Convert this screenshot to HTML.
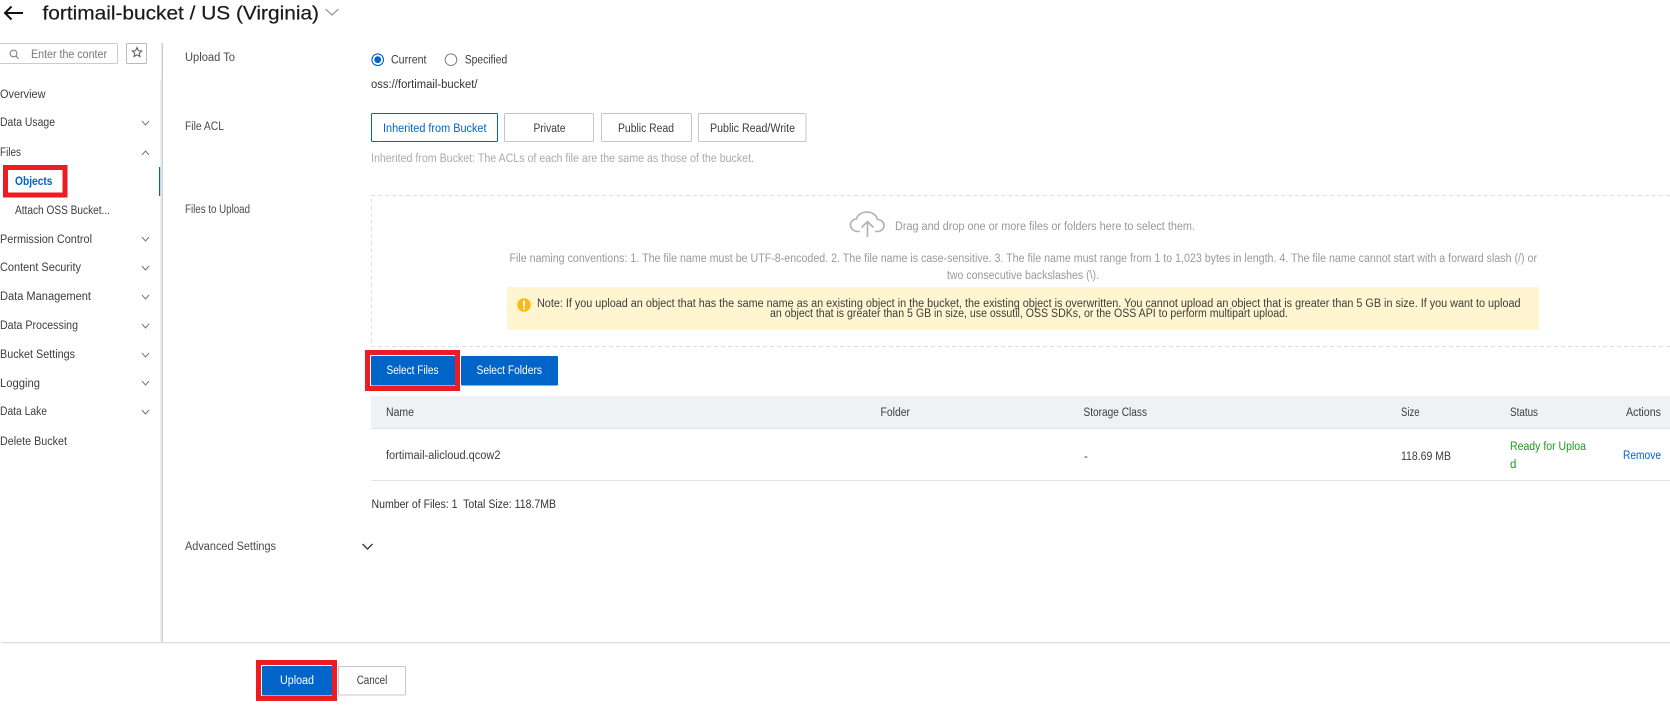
<!DOCTYPE html>
<html lang="en">
<head>
<meta charset="utf-8">
<title>Upload</title>
<style>
html,body{margin:0;padding:0;background:#fff;width:1670px;height:716px;overflow:hidden}
svg{display:block}
text{font-family:"Liberation Sans",Arial,sans-serif;font-size:11.5px;fill:#444;white-space:pre}
.m{fill:#3d3d3d}
.l{fill:#4a4a4a}
.g{fill:#999}
.h{fill:#aaa}
.w{fill:#fff}
.chev{fill:none;stroke:#777;stroke-width:1}
</style>
</head>
<body>
<svg width="1670" height="716" viewBox="0 0 1670 716" xmlns="http://www.w3.org/2000/svg">
<rect width="1670" height="716" fill="#fff"/>

<!-- header -->
<path d="M23 13H5M11.5 6.5L5 13L11.5 19.5" fill="none" stroke="#111" stroke-width="2"/>
<text x="42.5" y="19.5" textLength="276.5" lengthAdjust="spacingAndGlyphs" style="font-size:19px;fill:#1a1a1a;stroke:#1a1a1a;stroke-width:.2">fortimail-bucket / US (Virginia)</text>
<path d="M325.5 9L332 15L338.5 9" fill="none" stroke="#999" stroke-width="1.2"/>

<!-- search -->
<rect x="-2" y="43.5" width="119.5" height="20" rx="1" fill="#fff" stroke="#ccc"/>
<circle cx="13.5" cy="53.5" r="3.4" fill="none" stroke="#777"/>
<path d="M16 56L18.5 58.5" stroke="#777" stroke-width="1"/>
<text x="31" y="58" textLength="76" lengthAdjust="spacingAndGlyphs" style="fill:#777">Enter the conter</text>
<rect x="126.5" y="43.5" width="20" height="20" rx="1" fill="#fff" stroke="#bbb"/>
<path d="M137 47.5L138.4 50.7L141.8 51L139.2 53.2L140 56.6L137 54.8L134 56.6L134.8 53.2L132.2 51L135.6 50.7Z" fill="none" stroke="#555" stroke-width="1"/>

<!-- dividers -->
<rect x="160" y="79" width="1" height="563" fill="#f0f0f0"/>
<rect x="161.5" y="43" width="1.5" height="599" fill="#cfcfcf"/>
<rect x="159" y="167" width="1.2" height="29" fill="#0064c8"/>
<rect x="1" y="642" width="1669" height="1.2" fill="#dcdcdc"/>

<!-- sidebar -->
<text class="m" x="0" y="98" textLength="45.5" lengthAdjust="spacingAndGlyphs">Overview</text>
<text class="m" x="0" y="126" textLength="55" lengthAdjust="spacingAndGlyphs">Data Usage</text>
<text class="m" x="0" y="156" textLength="21" lengthAdjust="spacingAndGlyphs">Files</text>
<text x="15" y="185" textLength="37.5" lengthAdjust="spacingAndGlyphs" style="fill:#0064c8;font-weight:bold">Objects</text>
<text class="m" x="15" y="214" textLength="95" lengthAdjust="spacingAndGlyphs">Attach OSS Bucket...</text>
<text class="m" x="0" y="243" textLength="92" lengthAdjust="spacingAndGlyphs">Permission Control</text>
<text class="m" x="0" y="271" textLength="81" lengthAdjust="spacingAndGlyphs">Content Security</text>
<text class="m" x="0" y="300" textLength="91" lengthAdjust="spacingAndGlyphs">Data Management</text>
<text class="m" x="0" y="329" textLength="78" lengthAdjust="spacingAndGlyphs">Data Processing</text>
<text class="m" x="0" y="358" textLength="75" lengthAdjust="spacingAndGlyphs">Bucket Settings</text>
<text class="m" x="0" y="387" textLength="40" lengthAdjust="spacingAndGlyphs">Logging</text>
<text class="m" x="0" y="415" textLength="47" lengthAdjust="spacingAndGlyphs">Data Lake</text>
<text class="m" x="0" y="445" textLength="67" lengthAdjust="spacingAndGlyphs">Delete Bucket</text>

<path class="chev" d="M142 121L145.5 125L149 121"/>
<path class="chev" d="M142 155L145.5 151L149 155"/>
<path class="chev" d="M142 237L145.5 241L149 237"/>
<path class="chev" d="M142 266L145.5 270L149 266"/>
<path class="chev" d="M142 295L145.5 299L149 295"/>
<path class="chev" d="M142 324L145.5 328L149 324"/>
<path class="chev" d="M142 353L145.5 357L149 353"/>
<path class="chev" d="M142 381L145.5 385L149 381"/>
<path class="chev" d="M142 410L145.5 414L149 410"/>

<rect x="5.5" y="167.5" width="59.5" height="27.5" fill="none" stroke="#ed1c24" stroke-width="5"/>

<!-- labels -->
<text class="l" x="185" y="61" textLength="50" lengthAdjust="spacingAndGlyphs">Upload To</text>
<text class="l" x="185" y="130" textLength="39" lengthAdjust="spacingAndGlyphs">File ACL</text>
<text class="l" x="185" y="213" textLength="65" lengthAdjust="spacingAndGlyphs">Files to Upload</text>
<text class="l" x="185" y="550" textLength="91" lengthAdjust="spacingAndGlyphs">Advanced Settings</text>
<path d="M362.5 544L367.5 549L372.5 544" fill="none" stroke="#333" stroke-width="1.3"/>

<!-- radio -->
<circle cx="377.7" cy="59.7" r="5.8" fill="#fff" stroke="#0064c8" stroke-width="1.1"/>
<circle cx="377.7" cy="59.7" r="3.4" fill="#0064c8"/>
<text class="m" x="391" y="63.5" textLength="35.5" lengthAdjust="spacingAndGlyphs">Current</text>
<circle cx="451" cy="59.7" r="5.8" fill="#fff" stroke="#6b7f96" stroke-width="1"/>
<text class="m" x="464.7" y="63.5" textLength="42.5" lengthAdjust="spacingAndGlyphs">Specified</text>
<text x="371" y="88" textLength="106.5" lengthAdjust="spacingAndGlyphs" style="fill:#333">oss://fortimail-bucket/</text>

<!-- ACL buttons -->
<rect x="371.5" y="113.5" width="126" height="28" rx="1" fill="#fff" stroke="#0064c8"/>
<text x="383" y="132" textLength="103.5" lengthAdjust="spacingAndGlyphs" style="fill:#0064c8">Inherited from Bucket</text>
<rect x="504.5" y="113.5" width="89" height="28" rx="1" fill="#fff" stroke="#c4c6cc"/>
<text class="m" x="533.5" y="132" textLength="32" lengthAdjust="spacingAndGlyphs">Private</text>
<rect x="601.5" y="113.5" width="90" height="28" rx="1" fill="#fff" stroke="#c4c6cc"/>
<text class="m" x="618" y="132" textLength="56" lengthAdjust="spacingAndGlyphs">Public Read</text>
<rect x="698.5" y="113.5" width="107.5" height="28" rx="1" fill="#fff" stroke="#c4c6cc"/>
<text class="m" x="710" y="132" textLength="85" lengthAdjust="spacingAndGlyphs">Public Read/Write</text>
<text class="h" x="371" y="162" textLength="383" lengthAdjust="spacingAndGlyphs">Inherited from Bucket: The ACLs of each file are the same as those of the bucket.</text>

<!-- dropzone -->
<path d="M1670 195.5H371.5V346.5H1670" fill="none" stroke="#ddd" stroke-width="1" stroke-dasharray="4 3"/>
<path d="M860 231.5H858C852.500 231.500 850 227 850.500 224C851 221 853.500 219 856.500 219C857.500 214.500 862 212 867 212C872 212 876.500 215 877.500 219.500C881.500 219.500 884 222.500 884 225.500C884 229 881 231.500 877.500 231.500H875" fill="none" stroke="#b0b0b0" stroke-width="1.6"/>
<path d="M867.500 237V222M861.500 227.500L867.500 221.500L873.500 227.500" fill="none" stroke="#b0b0b0" stroke-width="1.6"/>
<text class="g" x="895" y="230" textLength="300" lengthAdjust="spacingAndGlyphs">Drag and drop one or more files or folders here to select them.</text>
<text class="g" x="509.500" y="262" textLength="1027.500" lengthAdjust="spacingAndGlyphs">File naming conventions: 1. The file name must be UTF-8-encoded. 2. The file name is case-sensitive. 3. The file name must range from 1 to 1,023 bytes in length. 4. The file name cannot start with a forward slash (/) or</text>
<text class="g" x="947" y="279" textLength="152" lengthAdjust="spacingAndGlyphs">two consecutive backslashes (\).</text>

<!-- note -->
<rect x="507" y="287" width="1032" height="43" rx="1" fill="#fff5d0"/>
<circle cx="524" cy="305" r="6.800" fill="#fdb913"/>
<rect x="523.100" y="300.500" width="1.900" height="6" fill="#fff"/>
<rect x="523.100" y="307.700" width="1.900" height="1.900" fill="#fff"/>
<text class="m" x="537" y="307" textLength="983.500" lengthAdjust="spacingAndGlyphs">Note: If you upload an object that has the same name as an existing object in the bucket, the existing object is overwritten. You cannot upload an object that is greater than 5 GB in size. If you want to upload</text>
<text class="m" x="770" y="317" textLength="518" lengthAdjust="spacingAndGlyphs">an object that is greater than 5 GB in size, use ossutil, OSS SDKs, or the OSS API to perform multipart upload.</text>

<!-- select buttons -->
<rect x="367.500" y="352.500" width="90" height="36" fill="#fff" stroke="#ed1c24" stroke-width="5"/>
<rect x="371" y="356" width="84" height="29.500" rx="1" fill="#0064c8"/>
<text class="w" x="386.500" y="374" textLength="52" lengthAdjust="spacingAndGlyphs">Select Files</text>
<rect x="461" y="356" width="97" height="29.500" rx="1" fill="#0064c8"/>
<text class="w" x="476.500" y="374" textLength="65.500" lengthAdjust="spacingAndGlyphs">Select Folders</text>

<!-- table -->
<rect x="371" y="396" width="1299" height="32" fill="#eff1f5"/>
<rect x="371" y="428" width="1299" height="1" fill="#e2e2e2"/>
<rect x="371" y="480" width="1299" height="1" fill="#e2e2e2"/>
<text class="m" x="386" y="416" textLength="28" lengthAdjust="spacingAndGlyphs">Name</text>
<text class="m" x="880.500" y="416" textLength="29.500" lengthAdjust="spacingAndGlyphs">Folder</text>
<text class="m" x="1083.500" y="416" textLength="63.500" lengthAdjust="spacingAndGlyphs">Storage Class</text>
<text class="m" x="1401" y="416" textLength="18.500" lengthAdjust="spacingAndGlyphs">Size</text>
<text class="m" x="1510" y="416" textLength="28" lengthAdjust="spacingAndGlyphs">Status</text>
<text class="m" x="1626" y="416" textLength="35" lengthAdjust="spacingAndGlyphs">Actions</text>
<text class="m" x="386" y="459" textLength="114.500" lengthAdjust="spacingAndGlyphs">fortimail-alicloud.qcow2</text>
<text class="m" x="1084" y="460">-</text>
<text class="m" x="1401" y="460" textLength="50" lengthAdjust="spacingAndGlyphs">118.69 MB</text>
<text x="1510" y="450" textLength="76" lengthAdjust="spacingAndGlyphs" style="fill:#1e9a1e">Ready for Uploa</text>
<text x="1510" y="468" style="fill:#1e9a1e">d</text>
<text x="1623" y="459" textLength="38" lengthAdjust="spacingAndGlyphs" style="fill:#0064c8">Remove</text>
<text x="371.500" y="508" textLength="184.500" lengthAdjust="spacingAndGlyphs" style="fill:#333">Number of Files: 1  Total Size: 118.7MB</text>

<!-- footer buttons -->
<rect x="258.500" y="662.500" width="76" height="36" fill="#fff" stroke="#ed1c24" stroke-width="5"/>
<rect x="262" y="666" width="70" height="29.500" rx="1" fill="#0064c8"/>
<text class="w" x="280" y="684" textLength="34" lengthAdjust="spacingAndGlyphs">Upload</text>
<rect x="338.500" y="666.500" width="67" height="28.500" rx="1" fill="#fff" stroke="#c4c6cf"/>
<text class="m" x="356.700" y="684" textLength="30.600" lengthAdjust="spacingAndGlyphs">Cancel</text>
</svg>
</body>
</html>
